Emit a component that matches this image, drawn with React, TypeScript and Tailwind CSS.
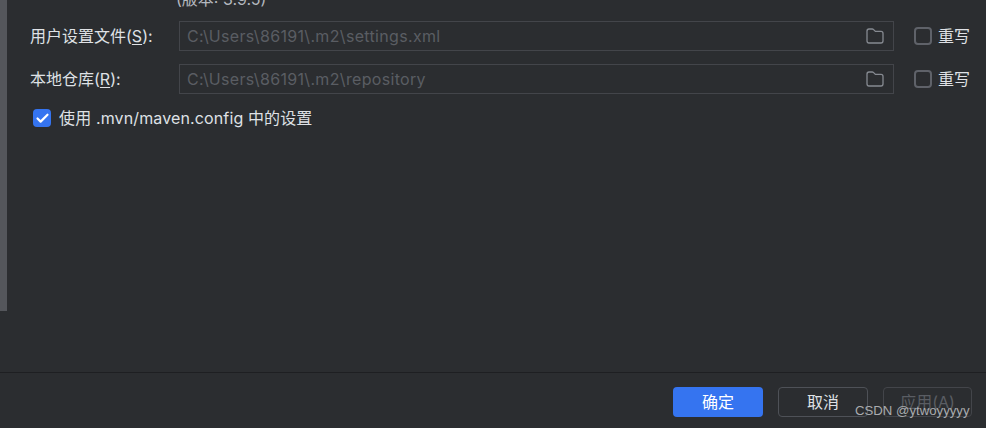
import React from 'react';
import { Check } from 'lucide-react';

const FolderIcon = () => (
  <svg width="18" height="16" viewBox="0 0 18 16" fill="none" stroke="#868a91" strokeWidth="1.3">
    <path d="M1 3.2C1 2 1.9 1 3 1h3.2c.6 0 1 .2 1.4.6L9.4 3.4H15c1.1 0 2 .9 2 2v7.4c0 1.2-.9 2.2-2 2.2H3c-1.1 0-2-1-2-2.2V3.2z" />
  </svg>
);

const PathRow = ({ label, hint, suffix, value }: { label: string; hint: string; suffix: string; value: string }) => (
  <div className="flex items-center h-[30px]">
    <div className="w-[149px] shrink-0 text-[#dfe1e5] whitespace-pre">
      {label}(<span className="underline underline-offset-2">{hint}</span>){suffix}
    </div>
    <div className="w-[715px] h-[30px] shrink-0 flex items-center justify-between border border-[#43454a] pl-[7px] pr-[9px]">
      <span className="text-[#5a5d63] tracking-[0.33px]">{value}</span>
      <FolderIcon />
    </div>
    <div className="ml-5 w-[18px] h-[18px] shrink-0 rounded-[4px] border-2 border-[#5f6269]" />
    <span className="ml-[6px] text-[#dfe1e5]">重写</span>
  </div>
);

export default function App() {
  return (
    <div
      className="relative w-[986px] h-[428px] overflow-hidden flex flex-col bg-[#2b2d30] text-[16px]"
      style={{ fontFamily: 'Inter, "Noto Sans CJK SC", sans-serif' }}
    >
      <div className="h-[372px] shrink-0 flex items-start">
        <div className="w-[7px] h-[311px] shrink-0 bg-[#54565b]" />
        <div className="pl-[23px] flex flex-col">
          <div className="-mt-[11px] mb-[11px] h-[21px] pl-[146px] leading-[21px] text-[#b4b8bf]">(版本: 3.9.5)</div>
          <div className="flex flex-col gap-[13px]">
            <PathRow label="用户设置文件" hint="S" suffix=":" value="C:\Users\86191\.m2\settings.xml" />
            <PathRow label="本地仓库" hint="R" suffix=":" value="C:\Users\86191\.m2\repository" />
          </div>
          <div className="mt-[15px] ml-[3px] flex items-center h-[18px]">
            <div className="w-[18px] h-[18px] rounded-[4px] bg-[#3574f0] flex items-center justify-center">
              <Check size={15} strokeWidth={3.5} color="#ffffff" />
            </div>
            <span className="ml-[8px] text-[#dfe1e5] whitespace-pre tracking-[0.13px]">使用 .mvn/maven.config 中的设置</span>
          </div>
        </div>
      </div>
      <div className="flex-1 border-t border-[#1e1f22] flex justify-end items-start pt-[14px] pr-[14px] gap-[15px]">
        <button className="w-[90px] h-[30px] rounded-[4px] bg-[#3574f0] text-white">确定</button>
        <button className="w-[90px] h-[30px] rounded-[4px] border border-[#4e5157] text-[#dfe1e5]">取消</button>
        <button className="w-[89px] h-[30px] rounded-[4px] border border-[#43454a] text-[#5a5d63]">应用(A)</button>
      </div>
      <div className="absolute left-[855px] top-[402px] text-[13.2px] leading-[17px] text-[#a9abae]" style={{ fontFamily: '"Liberation Sans", sans-serif' }}>
        CSDN @ytwoyyyyy
      </div>
    </div>
  );
}
